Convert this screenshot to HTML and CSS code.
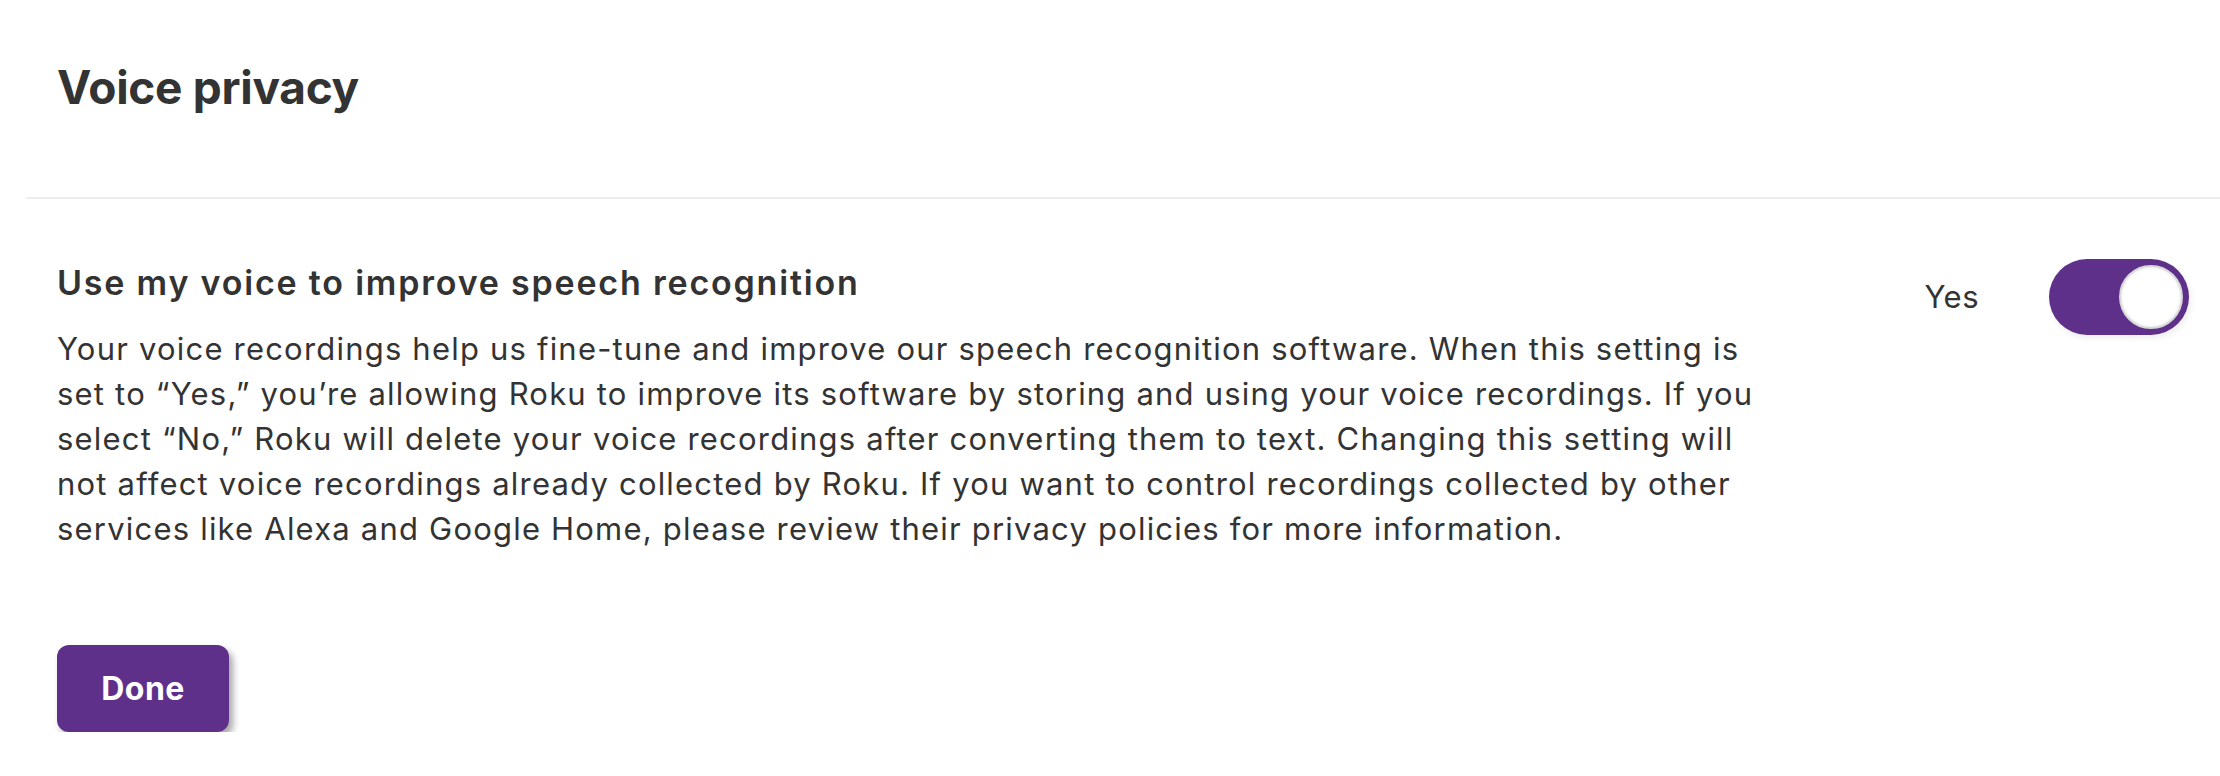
FILE: index.html
```html
<!DOCTYPE html>
<html lang="en">
<head>
<meta charset="utf-8">
<title>Voice privacy</title>
<link rel="stylesheet" href="styles.css">
</head>
<body>
<main class="page">
  <header class="page-header">
    <h1 class="page-title">Voice privacy</h1>
  </header>
  <section class="setting">
    <div class="setting-text">
      <h2 class="setting-title">Use my voice to improve speech recognition</h2>
      <p class="setting-desc">Your voice recordings help us fine-tune and improve our speech recognition software. When this setting is set to “Yes,” you’re allowing Roku to improve its software by storing and using your voice recordings. If you select “No,” Roku will delete your voice recordings after converting them to text. Changing this setting will not affect voice recordings already collected by Roku. If you want to control recordings collected by other services like Alexa and Google Home, please review their privacy policies for more information.</p>
    </div>
    <div class="setting-control">
      <span class="toggle-label">Yes</span>
      <span class="toggle is-on" role="switch" aria-checked="true"><span class="toggle-knob"></span></span>
    </div>
  </section>
  <div class="actions">
    <button class="btn-primary" type="button">Done</button>
  </div>
</main>
</body>
</html>
```

FILE: styles.css
```css
* { box-sizing: border-box; }

html, body {
  margin: 0;
  padding: 0;
  background: #ffffff;
}

body {
  font-family: Inter, "Open Sans", "Liberation Sans", sans-serif;
  color: #333333;
}

.page {
  padding-left: 26px;
}

.page-header {
  height: 199px;
  padding: 59px 31px 0;
  border-bottom: 2px solid #ececec;
}

.page-title {
  margin: 0;
  font-size: 46px;
  line-height: 56px;
  font-weight: 700;
  letter-spacing: -0.3px;
  color: #333333;
}

.setting {
  display: flex;
  align-items: flex-start;
  justify-content: space-between;
  padding: 60px 31px 0;
}

.setting-text {
  width: 1715px;
  padding-top: 4px;
}

.setting-title {
  margin: 0;
  font-size: 34px;
  line-height: 40px;
  font-weight: 600;
  letter-spacing: 1.8px;
  color: #333333;
}

.setting-desc {
  margin: 23px 0 0;
  font-size: 31px;
  line-height: 45px;
  font-weight: 400;
  letter-spacing: 1.2px;
  color: #333333;
}

.setting-control {
  display: flex;
  align-items: center;
  gap: 70px;
}

.toggle-label {
  font-size: 31px;
  line-height: 40px;
  letter-spacing: 0.5px;
  color: #333333;
}

.toggle {
  position: relative;
  display: block;
  width: 140px;
  height: 76px;
  border-radius: 38px;
  background: #5f3089;
  box-shadow: 2px 3px 6px rgba(0, 0, 0, 0.08);
}

.toggle-knob {
  position: absolute;
  top: 6px;
  right: 6px;
  width: 64px;
  height: 64px;
  border-radius: 50%;
  background: #ffffff;
  border: 2px solid #d8d8d8;
  box-shadow: inset 0 0 3px rgba(0, 0, 0, 0.15);
}

.actions {
  padding: 94px 31px 0;
}

.btn-primary {
  width: 172px;
  height: 87px;
  border: 0;
  border-radius: 12px;
  background: #5f3089;
  color: #ffffff;
  font-family: inherit;
  font-size: 32px;
  font-weight: 700;
  letter-spacing: 0.5px;
  box-shadow: 4px 5px 7px rgba(0, 0, 0, 0.35);
  cursor: pointer;
}
```
